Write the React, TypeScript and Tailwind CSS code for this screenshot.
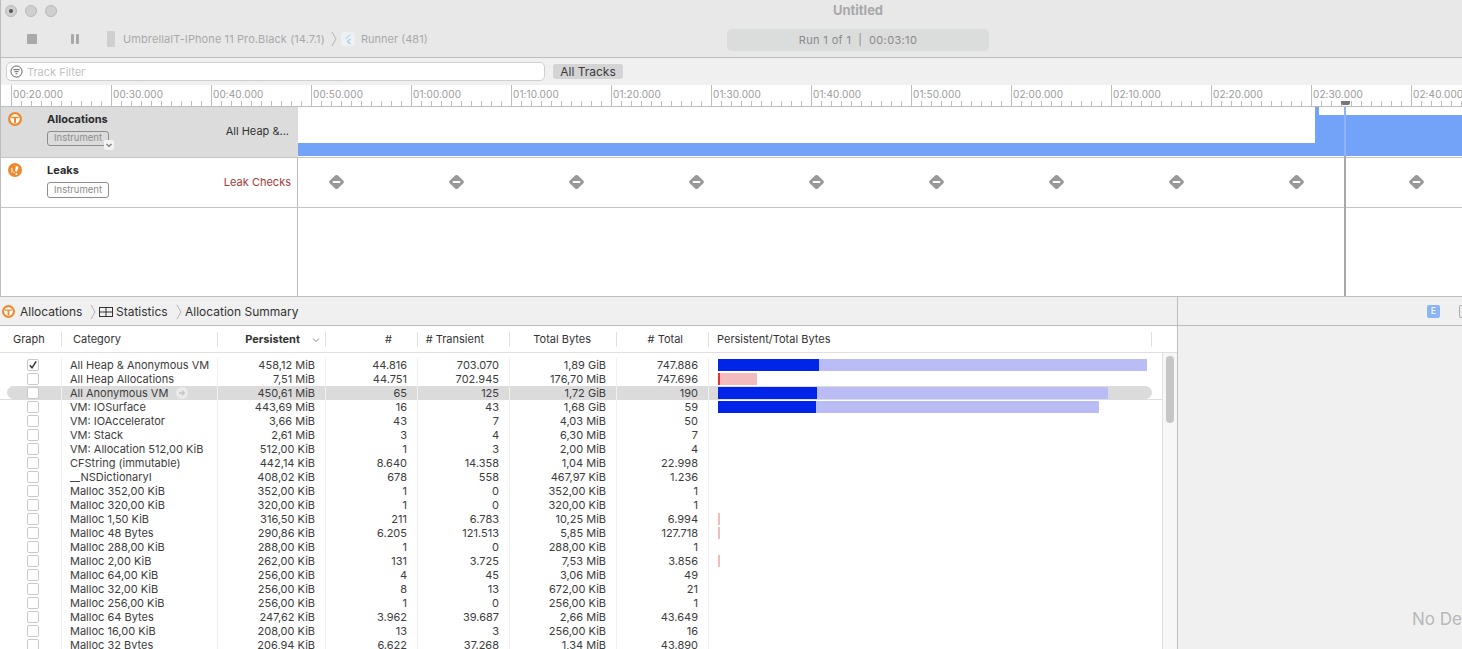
import React from 'react';

const FONT = "font-['Inter','Liberation_Sans',Arial,sans-serif]";

const rulerLabels = [
  '00:20.000', '00:30.000', '00:40.000', '00:50.000', '01:00.000', '01:10.000', '01:20.000', '01:30.000',
  '01:40.000', '01:50.000', '02:00.000', '02:10.000', '02:20.000', '02:30.000', '02:40.000',
];

type Row = {
  name: string;
  persistent: string;
  count: string;
  transient: string;
  totalBytes: string;
  total: string;
  checked?: boolean;
  selected?: boolean;
  bar?: { kind: 'blue' | 'red'; dark: number; full: number };
};

const rows: Row[] = [
  { name: 'All Heap & Anonymous VM', persistent: '458,12 MiB', count: '44.816', transient: '703.070', totalBytes: '1,89 GiB', total: '747.886', checked: true, bar: { kind: 'blue', dark: 101, full: 429 } },
  { name: 'All Heap Allocations', persistent: '7,51 MiB', count: '44.751', transient: '702.945', totalBytes: '176,70 MiB', total: '747.696', bar: { kind: 'red', dark: 2, full: 39 } },
  { name: 'All Anonymous VM', persistent: '450,61 MiB', count: '65', transient: '125', totalBytes: '1,72 GiB', total: '190', selected: true, bar: { kind: 'blue', dark: 99, full: 390 } },
  { name: 'VM: IOSurface', persistent: '443,69 MiB', count: '16', transient: '43', totalBytes: '1,68 GiB', total: '59', bar: { kind: 'blue', dark: 98, full: 381 } },
  { name: 'VM: IOAccelerator', persistent: '3,66 MiB', count: '43', transient: '7', totalBytes: '4,03 MiB', total: '50' },
  { name: 'VM: Stack', persistent: '2,61 MiB', count: '3', transient: '4', totalBytes: '6,30 MiB', total: '7' },
  { name: 'VM: Allocation 512,00 KiB', persistent: '512,00 KiB', count: '1', transient: '3', totalBytes: '2,00 MiB', total: '4' },
  { name: 'CFString (immutable)', persistent: '442,14 KiB', count: '8.640', transient: '14.358', totalBytes: '1,04 MiB', total: '22.998' },
  { name: '__NSDictionaryI', persistent: '408,02 KiB', count: '678', transient: '558', totalBytes: '467,97 KiB', total: '1.236' },
  { name: 'Malloc 352,00 KiB', persistent: '352,00 KiB', count: '1', transient: '0', totalBytes: '352,00 KiB', total: '1' },
  { name: 'Malloc 320,00 KiB', persistent: '320,00 KiB', count: '1', transient: '0', totalBytes: '320,00 KiB', total: '1' },
  { name: 'Malloc 1,50 KiB', persistent: '316,50 KiB', count: '211', transient: '6.783', totalBytes: '10,25 MiB', total: '6.994', bar: { kind: 'red', dark: 0, full: 2 } },
  { name: 'Malloc 48 Bytes', persistent: '290,86 KiB', count: '6.205', transient: '121.513', totalBytes: '5,85 MiB', total: '127.718', bar: { kind: 'red', dark: 0, full: 2 } },
  { name: 'Malloc 288,00 KiB', persistent: '288,00 KiB', count: '1', transient: '0', totalBytes: '288,00 KiB', total: '1' },
  { name: 'Malloc 2,00 KiB', persistent: '262,00 KiB', count: '131', transient: '3.725', totalBytes: '7,53 MiB', total: '3.856', bar: { kind: 'red', dark: 0, full: 2 } },
  { name: 'Malloc 64,00 KiB', persistent: '256,00 KiB', count: '4', transient: '45', totalBytes: '3,06 MiB', total: '49' },
  { name: 'Malloc 32,00 KiB', persistent: '256,00 KiB', count: '8', transient: '13', totalBytes: '672,00 KiB', total: '21' },
  { name: 'Malloc 256,00 KiB', persistent: '256,00 KiB', count: '1', transient: '0', totalBytes: '256,00 KiB', total: '1' },
  { name: 'Malloc 64 Bytes', persistent: '247,62 KiB', count: '3.962', transient: '39.687', totalBytes: '2,66 MiB', total: '43.649' },
  { name: 'Malloc 16,00 KiB', persistent: '208,00 KiB', count: '13', transient: '3', totalBytes: '256,00 KiB', total: '16' },
  { name: 'Malloc 32 Bytes', persistent: '206,94 KiB', count: '6.622', transient: '37.268', totalBytes: '1,34 MiB', total: '43.890' },
];

const COLS = 'grid grid-cols-[62px_156px_108px_92px_92px_107px_92px_454px]';

function AllocIcon({ className = '' }: { className?: string }) {
  return (
    <svg viewBox="0 0 14 14" className={className}>
      <circle cx="7" cy="7" r="7" fill="#ee8a2d" />
      <circle cx="7" cy="7" r="4.7" fill="#fff" />
      <path d="M3.2 4.8h7.6v1.5H8v4.7H6V6.3H3.2z" fill="#ee8a2d" />
    </svg>
  );
}

function LeakIcon({ className = '' }: { className?: string }) {
  return (
    <svg viewBox="0 0 14 14" className={className}>
      <circle cx="7" cy="7" r="7" fill="#ee8a2d" />
      <path d="M3.4 5h1.1v4.4H3.4zM7.6 3.2h2.6v3h-.7v1.4L8.4 9 7 7.6V6.2h.6z" fill="#fff" />
      <circle cx="8.4" cy="11" r="1" fill="#fff" />
      <circle cx="5.9" cy="9.2" r="0.7" fill="#fff" />
    </svg>
  );
}

function FlutterIcon() {
  return (
    <svg viewBox="0 0 14 14" className="w-[14px] h-[14px]">
      <rect width="14" height="14" rx="4" fill="#eef1f3" />
      <path d="M8 2.5h2.4L5.2 7.4 4 6.2z" fill="#bfe0f5" />
      <path d="M8 7h2.4L7.8 9.6 10.4 12H8L5.6 9.6z" fill="#a9d2ee" />
    </svg>
  );
}

function Crumb() {
  return (
    <svg viewBox="0 0 6 16" className="w-[6px] h-[16px] shrink-0">
      <path d="M1 1l4 7-4 7" fill="none" stroke="#b4b4b4" strokeWidth="1" />
    </svg>
  );
}

function Ruler() {
  return (
    <div className="flex h-[22px] pl-[11px] bg-white border-b border-[#bdbdbd] overflow-hidden shrink-0">
      {rulerLabels.map((label) => (
        <div key={label} className="w-[100px] shrink-0 h-full flex flex-col justify-between border-l border-[#bdbdbd]">
          <span className="pl-[1px] pt-[4px] text-[10px] leading-[11px] tracking-[0.1px] text-[#9a9a9a] whitespace-nowrap">{label}</span>
          <svg viewBox="0 0 100 5" className="w-[100px] h-[5px] shrink-0">
            {[9, 19, 29, 39, 49, 59, 69, 79, 89].map((x) => (
              <line key={x} x1={x + 0.5} x2={x + 0.5} y1="0" y2="5" stroke="#bdbdbd" />
            ))}
          </svg>
        </div>
      ))}
    </div>
  );
}

function Diamond() {
  return (
    <svg viewBox="0 0 15 14" className="w-[15px] h-[14px]">
      <path d="M5.8 0.8a2.4 2.4 0 0 1 3.4 0l4.9 4.6a2.2 2.2 0 0 1 0 3.2l-4.9 4.6a2.4 2.4 0 0 1-3.4 0L0.9 8.6a2.2 2.2 0 0 1 0-3.2z" fill="#999" />
      <rect x="3.8" y="6" width="7.4" height="2" rx="0.6" fill="#fff" />
    </svg>
  );
}

function BarCell({ bar }: { bar: Row['bar'] }) {
  if (!bar) return <div />;
  const dark = bar.kind === 'blue' ? 'bg-[#0024e8]' : 'bg-[#e63232]';
  const light = bar.kind === 'blue' ? 'bg-[#b9bcf5]' : 'bg-[#f2bcbf]';
  return (
    <div className="pl-[9px] flex items-center relative">
      <div className={`flex h-[12px] ${light}`} style={{ width: bar.full }}>
        <div className={dark} style={{ width: bar.dark }} />
      </div>
    </div>
  );
}

function TableRow({ row }: { row: Row }) {
  const num = 'text-right pr-[10px] border-r border-[#f0f0f0] whitespace-nowrap';
  return (
    <div className={`${COLS} h-[14px] leading-[14px] relative text-[#3c3c3c] ${row.selected ? 'border-b border-[#dcdcdc]' : ''}`}>
      {row.selected && <div className="absolute left-[7px] top-0 w-[1145px] h-[13px] rounded-[7px] bg-[#dbdbdb]" />}
      <div className="relative flex justify-start pl-[27px] border-r border-[#f0f0f0]">
        <div className="w-[12px] h-[12px] mt-[1px] bg-white border border-[#c9c9c9] rounded-[2px] flex items-center justify-center">
          {row.checked && (
            <svg viewBox="0 0 10 10" className="w-[10px] h-[10px]">
              <path d="M1.8 5.2l2.2 2.6 4.2-6.4" fill="none" stroke="#333" strokeWidth="1.5" />
            </svg>
          )}
        </div>
      </div>
      <div className="relative pl-[8px] whitespace-nowrap flex items-center gap-[8px] border-r border-[#f0f0f0]">
        {row.name}
        {row.selected && (
          <svg viewBox="0 0 12 12" className="w-[12px] h-[12px]">
            <circle cx="6" cy="6" r="6" fill="#eaeaea" />
            <path d="M3 6h5M6 3.6L8.4 6 6 8.4" fill="none" stroke="#c4c4c4" strokeWidth="1.3" />
          </svg>
        )}
      </div>
      <div className={`relative ${num}`}>{row.persistent}</div>
      <div className={`relative ${num}`}>{row.count}</div>
      <div className={`relative ${num}`}>{row.transient}</div>
      <div className={`relative ${num}`}>{row.totalBytes}</div>
      <div className={`relative ${num}`}>{row.total}</div>
      <BarCell bar={row.bar} />
    </div>
  );
}

function Header({ label, bold, right }: { label: string; bold?: boolean; right?: React.ReactNode }) {
  return (
    <div className="flex items-center justify-end pr-[25px] h-[15px] border-r border-[#e0e0e0] relative">
      <span className={bold ? 'font-bold' : ''}>{label}</span>
      {right}
    </div>
  );
}

export default function App() {
  return (
    <div className={`${FONT} w-[1462px] h-[649px] overflow-hidden flex flex-col relative bg-white text-[11px]`}>
      {/* title bar + toolbar */}
      <div className="h-[58px] shrink-0 bg-[#e8e8e8] border-b border-[#bdbdbd] flex flex-col">
        <div className="h-[22px] pt-[5px] pl-[5px] flex items-start shrink-0">
          <div className="flex gap-[8px]">
            <div className="w-[12px] h-[12px] rounded-full bg-[#cfcfcf] border border-[#b8b8b8] flex items-center justify-center">
              <div className="w-[4px] h-[4px] rounded-full bg-[#555]" />
            </div>
            <div className="w-[12px] h-[12px] rounded-full bg-[#cfcfcf] border border-[#b8b8b8]" />
            <div className="w-[12px] h-[12px] rounded-full bg-[#cfcfcf] border border-[#b8b8b8]" />
          </div>
          <div className="ml-[713px] -mt-[1px] w-[176px] text-center text-[13px] leading-[13px] font-bold text-[#a9a9a9]">Untitled</div>
        </div>
        <div className="flex items-start pl-[27px] text-[#a8a8a8] mt-[7px]">
          <div className="w-[10px] h-[10px] mt-[5px] bg-[#a9a9a9] rounded-[1px]" />
          <div className="ml-[34px] mt-[5px] flex gap-[2px]">
            <div className="w-[3px] h-[10px] bg-[#a9a9a9] rounded-[1px]" />
            <div className="w-[3px] h-[10px] bg-[#a9a9a9] rounded-[1px]" />
          </div>
          <div className="ml-[28px] mt-[2px] w-[8px] h-[16px] bg-[#cfcfcf] rounded-[1px]" />
          <div className="ml-[8px] mt-[4px] w-[202px] whitespace-nowrap leading-[13px] tracking-[0.1px]">UmbrellaIT-IPhone 11 Pro.Black (14.7.1)</div>
          <div className="ml-[6px] mt-[2px]"><Crumb /></div>
          <div className="ml-[4px] mt-[3px]"><FlutterIcon /></div>
          <div className="ml-[6px] mt-[4px] w-[366px] whitespace-nowrap leading-[13px]">Runner (481)</div>
          <div className="w-[262px] h-[22px] rounded-[5px] bg-[#dbdcdc] text-[#8a8a8a] tracking-[0.35px] flex items-center justify-center">Run 1 of 1&nbsp; |&nbsp; 00:03:10</div>
        </div>
      </div>

      {/* track filter */}
      <div className="h-[27px] shrink-0 bg-[#f0f0f0] flex items-center pl-[6px]">
        <div className="w-[539px] h-[19px] bg-white border border-[#cfcfcf] rounded-[5px] flex items-center pl-[3px] gap-[4px] text-[#c2c2c2]">
          <svg viewBox="0 0 14 14" className="w-[13px] h-[13px]">
            <circle cx="7" cy="7" r="6" fill="none" stroke="#555" strokeWidth="1" />
            <path d="M3.6 5h6.8M4.8 7.2h4.4M6 9.4h2" stroke="#555" strokeWidth="1" />
          </svg>
          <span className="pt-[1px]">Track Filter</span>
        </div>
        <div className="ml-[8px] w-[70px] h-[15px] rounded-[3px] bg-[#d4d4d4] text-[#3a3a3a] text-[12px] flex items-center justify-center">All Tracks</div>
      </div>

      <Ruler />

      {/* tracks */}
      <div className="h-[190px] shrink-0 flex flex-col border-b border-[#bdbdbd]">
        <div className="flex h-[50px] shrink-0">
          <div className="w-[298px] shrink-0 bg-[#dcdcdc] relative flex">
            <AllocIcon className="w-[14px] h-[14px] ml-[8px] mt-[5px] shrink-0" />
            <div className="ml-[25px] mt-[6px] flex flex-col items-start">
              <span className="font-bold text-[#2b2b2b] leading-[13px]">Allocations</span>
              <div className="relative mt-[5px] w-[62px] h-[15px] rounded-[3px] border border-[#8c8c8c] text-[9.5px] text-[#8c8c8c] flex items-center justify-center">
                Instrument
                <div className="absolute -right-[6px] -bottom-[5px] w-[10px] h-[10px] rounded-[2px] bg-[#f2f2f2] flex items-center justify-center">
                  <svg viewBox="0 0 8 8" className="w-[8px] h-[8px]"><path d="M1.5 3l2.5 2.5L6.5 3" fill="none" stroke="#777" strokeWidth="1.2" /></svg>
                </div>
              </div>
            </div>
            <div className="ml-auto pr-[9px] pt-[18px] text-[#333] leading-[13px] whitespace-nowrap">All Heap &amp;...</div>
          </div>
          <div className="flex-1 flex items-end pb-[1px] bg-white">
            <div className="w-[1017px] h-[13px] bg-[#73a3f8]" />
            <div className="w-[4px] h-full bg-[#73a3f8]" />
            <div className="flex-1 h-[41px] bg-[#73a3f8]" />
          </div>
        </div>
        <div className="flex h-[51px] shrink-0 border-t border-b border-[#c4c4c4]">
          <div className="w-[297px] shrink-0 flex">
            <LeakIcon className="w-[14px] h-[14px] ml-[8px] mt-[5px] shrink-0" />
            <div className="ml-[25px] mt-[6px] flex flex-col items-start">
              <span className="font-bold text-[#2b2b2b] leading-[13px]">Leaks</span>
              <div className="mt-[5px] w-[62px] h-[16px] rounded-[3px] border border-[#8c8c8c] text-[9.5px] text-[#8c8c8c] flex items-center justify-center">Instrument</div>
            </div>
            <div className="ml-auto pr-[6px] pt-[18px] text-[#a33a38] leading-[13px] whitespace-nowrap">Leak Checks</div>
          </div>
          <div className="flex-1 border-l border-[#bdbdbd] flex items-center pl-[31px] pb-[1px]">
            {[0, 1, 2, 3, 4, 5, 6, 7, 8, 9].map((i) => (
              <div key={i} className="w-[120px] shrink-0"><Diamond /></div>
            ))}
          </div>
        </div>
        <div className="flex flex-1">
          <div className="w-[298px] shrink-0 border-r border-[#bdbdbd]" />
        </div>
      </div>

      {/* lower panes */}
      <div className="flex-1 flex min-h-0">
        <div className="w-[1178px] shrink-0 flex flex-col border-r border-[#bdbdbd]">
          <div className="h-[29px] shrink-0 bg-[#f0f0f0] border-b border-[#bdbdbd] flex items-center pt-[1px] text-[12px] text-[#333] whitespace-nowrap">
            <AllocIcon className="w-[13px] h-[13px] ml-[2px] shrink-0" />
            <span className="ml-[5px] w-[62px]">Allocations</span>
            <span className="ml-[8px]"><Crumb /></span>
            <svg viewBox="0 0 14 10" className="w-[14px] h-[10px] ml-[3px] shrink-0">
              <rect x="0.5" y="0.5" width="13" height="9" fill="none" stroke="#333" />
              <path d="M0 5h14M7 0v10" stroke="#333" />
            </svg>
            <span className="ml-[3px] w-[52px]">Statistics</span>
            <span className="ml-[8px]"><Crumb /></span>
            <span className="ml-[3px]">Allocation Summary</span>
          </div>
          <div className={`${COLS} h-[27px] shrink-0 items-center border-b border-[#e0e0e0] text-[#333]`}>
            <div className="h-[15px] flex items-center pl-[13px] border-r border-[#e0e0e0]">Graph</div>
            <div className="h-[15px] flex items-center pl-[11px] border-r border-[#e0e0e0]">Category</div>
            <Header
              label="Persistent"
              bold
              right={
                <svg viewBox="0 0 8 6" className="absolute right-[5px] top-[5px] w-[8px] h-[6px]">
                  <path d="M1 1.5l3 3 3-3" fill="none" stroke="#888" />
                </svg>
              }
            />
            <Header label="#" />
            <Header label="# Transient" />
            <Header label="Total Bytes" />
            <Header label="# Total" />
            <div className="h-[15px] flex items-center pl-[8px] border-r border-[#e0e0e0] w-[443px]">Persistent/Total Bytes</div>
          </div>
          <div className="flex-1 min-h-0 flex overflow-hidden">
            <div className="w-[1163px] shrink-0 overflow-hidden border-r border-[#e0e0e0] pt-[5px]">
              {rows.map((row) => (
                <TableRow key={row.name} row={row} />
              ))}
            </div>
            <div className="flex-1 bg-[#f7f7f7] pt-[3px] pl-[3px]">
              <div className="w-[8px] h-[67px] rounded-[4px] bg-[#c6c6c6]" />
            </div>
          </div>
        </div>
        <div className="flex-1 bg-[#f0f0f0] flex flex-col overflow-hidden">
          <div className="h-[29px] shrink-0 border-b border-[#bdbdbd] flex items-center pl-[249px] gap-[19px]">
            <div className="w-[13px] h-[13px] rounded-[2px] bg-[#8ab4f4] text-white text-[9px] flex items-center justify-center shrink-0">E</div>
            <div className="w-[13px] h-[13px] rounded-[2px] border border-[#aaa] shrink-0" />
          </div>
          <div className="flex-1 flex items-end pl-[234px] pb-[19px] text-[17px] leading-[21px] text-[#b8b8b8] whitespace-nowrap">No Details</div>
        </div>
      </div>

      {/* window edge + playhead */}
      <div className="absolute left-0 top-0 w-[1px] h-[297px] bg-[#bdbdbd]" />
      <div className="absolute left-[1344px] top-[107px] w-[2px] h-[189px] flex flex-col">
        <div className="h-[49px] bg-[#8fb4f6]" />
        <div className="flex-1 bg-[#a8a8a8]" />
      </div>
      <div className="absolute left-[1341px] top-[101px] w-[9px] h-[4px] rounded-b-[2px] bg-[#777]" />
    </div>
  );
}
